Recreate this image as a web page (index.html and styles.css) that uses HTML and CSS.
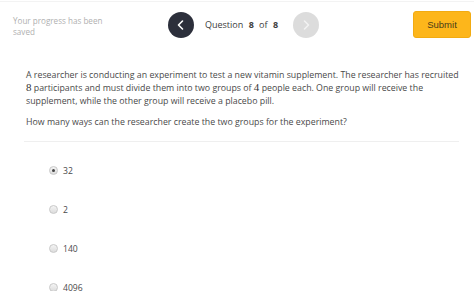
FILE: index.html
```html
<!DOCTYPE html>
<html>
<head>
<meta charset="utf-8">
<link rel="stylesheet" href="styles.css">
</head>
<body>
<div class="page">
  <header class="topbar">
    <div class="saved">Your progress has been<br>saved</div>
    <nav class="nav">
      <span class="circle prev"><svg width="12" height="12" viewBox="0 0 12 12"><path d="M7.5 2 L3.5 6 L7.5 10" fill="none" stroke="#fff" stroke-width="1.6" stroke-linecap="round" stroke-linejoin="round"/></svg></span>
      <span class="qlabel">Question <b>8</b> of <b>8</b></span>
      <span class="circle next"><svg width="12" height="12" viewBox="0 0 12 12"><path d="M4.5 2 L8.5 6 L4.5 10" fill="none" stroke="#f2f2f2" stroke-width="1.6" stroke-linecap="round" stroke-linejoin="round"/></svg></span>
    </nav>
    <button class="submit">Submit</button>
  </header>
  <main class="question">
    <p class="stem">A researcher is conducting an experiment to test a new vitamin supplement. The researcher has recruited <span class="num">8</span> participants and must divide them into two groups of <span class="num">4</span> people each. One group will receive the supplement, while the other group will receive a placebo pill.</p>
    <p class="ask">How many ways can the researcher create the two groups for the experiment?</p>
    <hr class="divider">
    <ul class="options">
      <li><span class="radio checked"></span>32</li>
      <li><span class="radio"></span>2</li>
      <li><span class="radio"></span>140</li>
      <li><span class="radio"></span>4096</li>
    </ul>
  </main>
</div>
</body>
</html>
```
FILE: styles.css
```css
html, body {
  margin: 0;
  padding: 0;
  background: #fff;
}
body {
  font-family: "Open Sans", "DejaVu Sans", sans-serif;
  color: #555;
  width: 474px;
  height: 291px;
  overflow: hidden;
}
.page {
  border-top: 1px solid #f3f3f3;
  margin-top: 1px;
}
.topbar {
  display: flex;
  align-items: center;
  height: 44px;
  margin-top: 2px;
  padding: 0 3px 0 13px;
}
.saved {
  width: 150px;
  font-size: 8.1px;
  line-height: 11px;
  color: #b0b0b0;
}
.nav {
  display: flex;
  align-items: center;
  margin-left: 5px;
  margin-top: -3px;
}
.circle {
  width: 26px;
  height: 26px;
  border-radius: 50%;
  display: flex;
  align-items: center;
  justify-content: center;
}
.prev { background: #2c2f3b; }
.next { background: #dcdcdc; }
.qlabel {
  font-size: 9px;
  color: #3c3c3c;
  margin: 0 12px 0 11px;
}
.qlabel b {
  font-weight: 700;
  margin: 0 3px;
}
.submit {
  margin-left: auto;
  margin-top: -3px;
  width: 58px;
  height: 27px;
  border: 1px solid #f2ab12;
  border-radius: 3px;
  background: #fdb61b;
  color: #4a3c18;
  font-family: "Liberation Sans", Arial, sans-serif;
  font-size: 9.5px;
  padding: 0;
}
.question {
  padding: 21px 12px 0 26px;
}
.stem, .ask {
  margin: 0;
  font-size: 8.8px;
  line-height: 13px;
  color: #4a4a4a;
}
.num {
  font-family: "Liberation Serif", "Times New Roman", serif;
  font-size: 11px;
  line-height: 0;
  color: #333;
}
.ask {
  margin-top: 8px;
}
.divider {
  border: 0;
  border-top: 1px solid #efefef;
  margin: 12px 3px 0 -2px;
}
.options {
  list-style: none;
  margin: 20px 0 0 23px;
  padding: 0;
}
.options li {
  display: flex;
  align-items: center;
  height: 17px;
  margin-bottom: 22px;
  font-size: 8.6px;
  color: #4a4a4a;
}
.radio {
  width: 7px;
  height: 7px;
  border-radius: 50%;
  border: 1px solid #c8c8c8;
  background: linear-gradient(#f4f4f4, #dcdcdc);
  margin-right: 5px;
  position: relative;
}
.radio.checked::after {
  content: "";
  position: absolute;
  left: 2px;
  top: 2px;
  width: 3px;
  height: 3px;
  border-radius: 50%;
  background: #444;
}
```
